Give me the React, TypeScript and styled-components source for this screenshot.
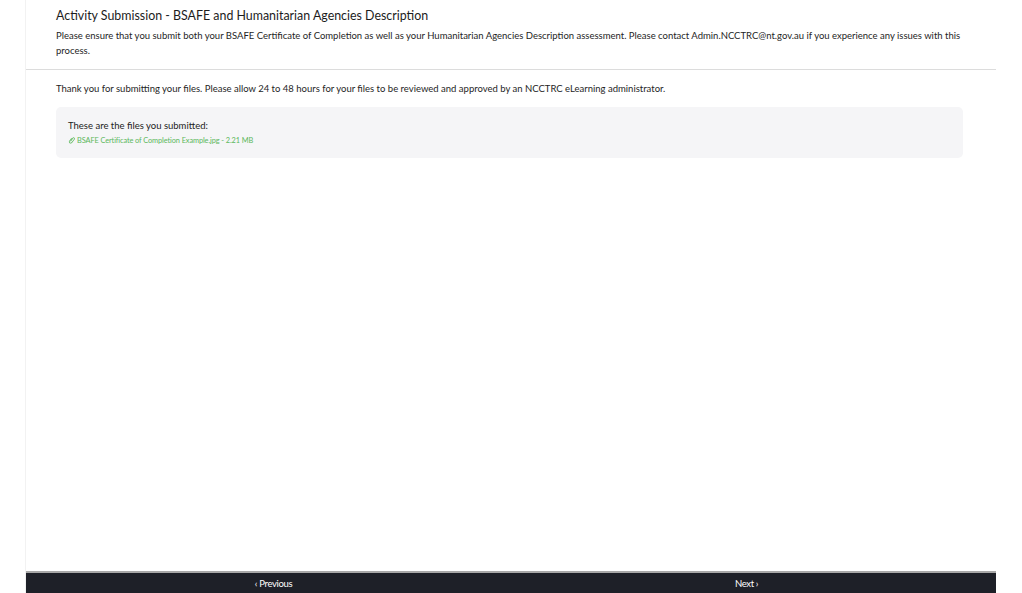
import styled, { createGlobalStyle } from "styled-components";

const GlobalStyle = createGlobalStyle`
  html, body {
    margin: 0;
    padding: 0;
    background: #ffffff;
  }
  body {
    font-family: Lato, "Open Sans", Arial, sans-serif;
    color: #1e1e1e;
  }
`;

const Page = styled.div`
  width: 971px;
  margin-left: 25px;
  min-height: 100vh;
  display: flex;
  flex-direction: column;
  border-left: 1px solid #f2f2f2;
  box-sizing: border-box;
`;

const Header = styled.header`
  padding: 7px 30px 11px 30px;
  border-bottom: 1px solid #dcdcdc;
`;

const Title = styled.h1`
  margin: 0 0 4px;
  font-size: 12.4px;
  font-weight: 400;
  line-height: 17px;
  color: #1c1c1c;
`;

const Intro = styled.p`
  margin: 0;
  font-size: 9.5px;
  line-height: 15px;
  color: #1e1e1e;
`;

const Body = styled.main`
  flex: 1;
  padding: 12px 30px 0 30px;
`;

const Notice = styled.p`
  margin: 0 0 11px;
  font-size: 9.5px;
  line-height: 14px;
`;

const FilesBox = styled.section`
  width: 907px;
  box-sizing: border-box;
  background: #f5f5f7;
  border-radius: 5px;
  padding: 12px 12px 12px;
`;

const FilesTitle = styled.div`
  font-size: 9.5px;
  line-height: 14px;
  color: #222;
`;

const FileLink = styled.a`
  display: flex;
  align-items: center;
  gap: 2px;
  margin-top: 2px;
  font-size: 7.4px;
  line-height: 11px;
  color: #5cb85c;
  text-decoration: none;
  letter-spacing: -0.1px;
`;

const Footer = styled.nav`
  display: grid;
  grid-template-columns: 1fr 1fr;
  height: 22px;
  background: #1e2028;
  border-top: 2px solid #a8a8a8;
  box-sizing: border-box;
`;

const NavButton = styled.button<{ $shift: number }>`
  background: none;
  border: none;
  color: #ffffff;
  font-family: Lato, Arial, sans-serif;
  font-size: 9.5px;
  letter-spacing: -0.35px;
  cursor: pointer;
  padding: 0;
  position: relative;
  left: ${(p) => p.$shift}px;
  display: flex;
  align-items: center;
  justify-content: center;
  gap: 2px;
`;

const Clip = () => (
  <svg width="7" height="7" viewBox="0 0 16 16" aria-hidden="true">
    <path
      d="M11.5 2.2a3 3 0 0 1 4.2 4.2l-7 7a4 4 0 0 1-5.7-5.7l5.5-5.5 1.2 1.2-5.5 5.5a2.3 2.3 0 0 0 3.3 3.3l7-7a1.3 1.3 0 0 0-1.8-1.8L6.2 9.9 5 8.7z"
      fill="#5cb85c"
      transform="rotate(-8 8 8)"
    />
  </svg>
);

export default function App() {
  return (
    <>
      <GlobalStyle />
      <Page>
        <Header>
          <Title>Activity Submission - BSAFE and Humanitarian Agencies Description</Title>
          <Intro>
            Please ensure that you submit both your BSAFE Certificate of Completion as well as your
            Humanitarian Agencies Description assessment. Please contact Admin.NCCTRC@nt.gov.au if you
            experience any issues with this process.
          </Intro>
        </Header>
        <Body>
          <Notice>
            Thank you for submitting your files. Please allow 24 to 48 hours for your files to be
            reviewed and approved by an NCCTRC eLearning administrator.
          </Notice>
          <FilesBox>
            <FilesTitle>These are the files you submitted:</FilesTitle>
            <FileLink href="#">
              <Clip />
              BSAFE Certificate of Completion Example.jpg - 2.21 MB
            </FileLink>
          </FilesBox>
        </Body>
        <Footer>
          <NavButton $shift={5}>‹ Previous</NavButton>
          <NavButton $shift={-7}>Next ›</NavButton>
        </Footer>
      </Page>
    </>
  );
}
